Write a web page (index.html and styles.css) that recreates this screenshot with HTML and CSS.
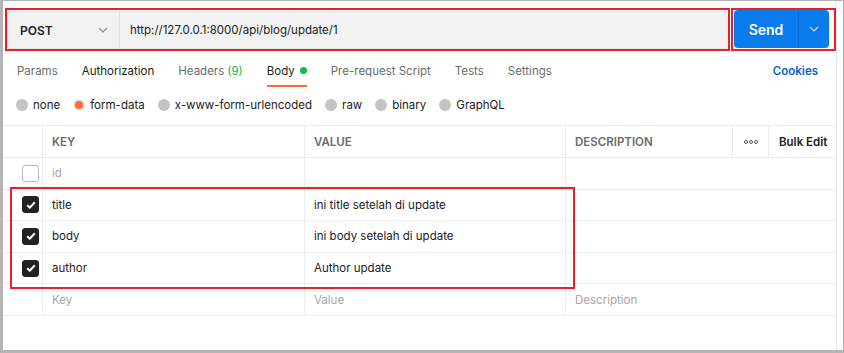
FILE: index.html
```html
<!DOCTYPE html>
<html>
<head>
<meta charset="utf-8">
<link rel="stylesheet" href="styles.css">
</head>
<body>
<div class="frame">
  <div class="panel">
    <div class="content">
      <div class="urlrow">
        <div class="urlbox">
          <div class="method">
            <span class="method-name">POST</span>
            <svg class="chev" width="10" height="6" viewBox="0 0 10 6"><path d="M1 1l4 4 4-4" fill="none" stroke="#8a8a8a" stroke-width="1.1"/></svg>
          </div>
          <div class="url">http://127.0.0.1:8000/api/blog/update/1</div>
        </div>
        <div class="sendwrap">
          <div class="send">
            <span class="send-label">Send</span>
            <span class="send-drop">
              <svg width="10" height="6" viewBox="0 0 10 6"><path d="M1 1l4 4 4-4" fill="none" stroke="#cfe3fb" stroke-width="1.1"/></svg>
            </span>
          </div>
        </div>
      </div>

      <div class="tabs">
        <span class="tab">Params</span>
        <span class="tab dark">Authorization</span>
        <span class="tab">Headers <span class="count">(9)</span></span>
        <span class="tab dark active">Body <span class="dot"></span></span>
        <span class="tab">Pre-request Script</span>
        <span class="tab">Tests</span>
        <span class="tab">Settings</span>
        <span class="spacer"></span>
        <span class="cookies">Cookies</span>
      </div>

      <div class="radios">
        <span class="radio"><span class="circle"></span>none</span>
        <span class="radio"><span class="circle on"></span>form-data</span>
        <span class="radio"><span class="circle"></span>x-www-form-urlencoded</span>
        <span class="radio"><span class="circle"></span>raw</span>
        <span class="radio"><span class="circle"></span>binary</span>
        <span class="radio"><span class="circle"></span>GraphQL</span>
      </div>

      <div class="table">
        <div class="row head">
          <div class="c chk"></div>
          <div class="c key">KEY</div>
          <div class="c val">VALUE</div>
          <div class="c desc">DESCRIPTION</div>
          <div class="c dots"><span class="o"></span><span class="o"></span><span class="o"></span></div>
          <div class="c bulk">Bulk Edit</div>
        </div>
        <div class="row">
          <div class="c chk"><span class="box"></span></div>
          <div class="c key faded">id</div>
          <div class="c val"></div>
          <div class="c desc wide"></div>
        </div>
        <div class="row">
          <div class="c chk"><span class="box checked"><svg width="10" height="8" viewBox="0 0 10 8"><path d="M1.2 4.2l2.6 2.5L8.8 1.3" fill="none" stroke="#fff" stroke-width="2"/></svg></span></div>
          <div class="c key">title</div>
          <div class="c val">ini title setelah di update</div>
          <div class="c desc wide"></div>
        </div>
        <div class="row">
          <div class="c chk"><span class="box checked"><svg width="10" height="8" viewBox="0 0 10 8"><path d="M1.2 4.2l2.6 2.5L8.8 1.3" fill="none" stroke="#fff" stroke-width="2"/></svg></span></div>
          <div class="c key">body</div>
          <div class="c val">ini body setelah di update</div>
          <div class="c desc wide"></div>
        </div>
        <div class="row">
          <div class="c chk"><span class="box checked"><svg width="10" height="8" viewBox="0 0 10 8"><path d="M1.2 4.2l2.6 2.5L8.8 1.3" fill="none" stroke="#fff" stroke-width="2"/></svg></span></div>
          <div class="c key">author</div>
          <div class="c val">Author update</div>
          <div class="c desc wide"></div>
        </div>
        <div class="row">
          <div class="c chk"></div>
          <div class="c key ph">Key</div>
          <div class="c val ph">Value</div>
          <div class="c desc wide ph">Description</div>
        </div>
      </div>

      <div class="mark mark-url"></div>
      <div class="mark mark-send"></div>
      <div class="mark mark-rows"></div>
    </div>
  </div>
</div>
</body>
</html>
```

FILE: styles.css
```css
* { box-sizing: border-box; }
html, body { margin: 0; padding: 0; }
body {
  font-family: Inter, "Open Sans", "Liberation Sans", sans-serif;
  font-size: 11.5px;
  color: #212121;
}
.frame {
  width: 844px;
  height: 353px;
  background: #b4b4b4;
  padding: 1px 1px 3px 3px;
}
.panel {
  background: #fff;
  height: 100%;
  width: 100%;
}
.content {
  position: relative;
  width: 834px;
  height: 100%;
  border-right: 1px solid #ececec;
}

/* URL row */
.urlrow {
  display: flex;
  padding-top: 7px;
  height: 49px;
}
.urlbox {
  margin-left: 4px;
  width: 722px;
  height: 38px;
  margin-top: 3px;
  display: flex;
  background: #f2f2f2;
  border: 1px solid #e4e4e4;
  border-radius: 2px;
}
.method {
  width: 112px;
  display: flex;
  align-items: center;
  justify-content: space-between;
  padding: 0 11px 0 12px;
  border-right: 1px solid #e0e0e0;
}
.method-name {
  font-weight: 600;
  font-size: 12px;
  color: #212121;
}
.url {
  display: flex;
  align-items: center;
  padding-left: 10px;
  color: #212121;
}
.sendwrap {
  margin-left: 5px;
  margin-top: 2px;
}
.send {
  width: 95px;
  height: 38px;
  background: #097bed;
  border-radius: 4px;
  display: flex;
  color: #fff;
}
.send-label {
  width: 65px;
  display: flex;
  align-items: center;
  justify-content: center;
  font-weight: 600;
  font-size: 14px;
  border-right: 1px solid #0a6bcf;
}
.send-drop {
  flex: 1;
  display: flex;
  align-items: center;
  justify-content: center;
}

/* tabs */
.tabs {
  display: flex;
  align-items: center;
  height: 37px;
  padding-left: 14px;
  padding-right: 18px;
  color: #6b6b6b;
}
.tab {
  position: relative;
  margin-right: 24px;
  height: 37px;
  display: flex;
  align-items: center;
  padding-top: 4px;
}
.tab.dark { color: #212121; }
.count { color: #0cbb52; margin-left: 3px; }
.dot {
  display: inline-block;
  width: 7px;
  height: 7px;
  border-radius: 50%;
  background: #0cbb52;
  margin-left: 5px;
}
.tab.active::after {
  content: "";
  position: absolute;
  left: 0;
  right: 0;
  bottom: 0;
  height: 2px;
  background: #ff6c37;
}
.spacer { flex: 1; }
.cookies {
  color: #0265d2;
  font-weight: 600;
  padding-top: 4px;
}

/* radios */
.radios {
  display: flex;
  align-items: center;
  height: 38px;
  padding-left: 13px;
  padding-bottom: 2px;
}
.radio {
  display: flex;
  align-items: center;
  margin-right: 13px;
  color: #212121;
}
.circle {
  width: 12px;
  height: 12px;
  border-radius: 50%;
  background: #c4c4c4;
  margin-right: 5px;
}
.circle.on {
  background: #ff6c37;
  border: 2px solid #e6e6e6;
}

/* table */
.table {
  border-top: 1px solid #ededed;
}
.row {
  display: flex;
  height: 31.6px;
  border-bottom: 1px solid #ededed;
}
.row.head {
  height: 32px;
  font-weight: 600;
  color: #6b6b6b;
}
.c {
  display: flex;
  align-items: center;
  padding-left: 9px;
  border-right: 1px solid #ededed;
}
.chk {
  width: 40px;
  padding-left: 19px;
}
.key { width: 262px; }
.val { width: 261px; }
.desc { width: 167px; }
.desc.wide { width: 270px; border-right: none; }
.dots {
  width: 36px;
  justify-content: center;
  padding-left: 0;
  gap: 1px;
}
.o {
  width: 4px;
  height: 4px;
  border: 1px solid #555;
  border-radius: 50%;
}
.bulk {
  flex: 1;
  border-right: none;
  color: #212121;
  padding-left: 10px;
}
.faded { color: #a6a6a6; }
.ph { color: #a6a6a6; }
.box {
  width: 17px;
  height: 17px;
  border-radius: 3px;
  border: 1px solid #b9b9b9;
  display: flex;
  align-items: center;
  justify-content: center;
}
.box.checked {
  background: #212121;
  border-color: #212121;
}

/* annotation boxes */
.mark {
  position: absolute;
  border: 2px solid #e8202a;
  pointer-events: none;
}
.mark-url { left: 2px; top: 7px; width: 725px; height: 43px; }
.mark-send { left: 728px; top: 7px; width: 105px; height: 43px; }
.mark-rows { left: 7px; top: 186px; width: 565px; height: 102px; }
```
